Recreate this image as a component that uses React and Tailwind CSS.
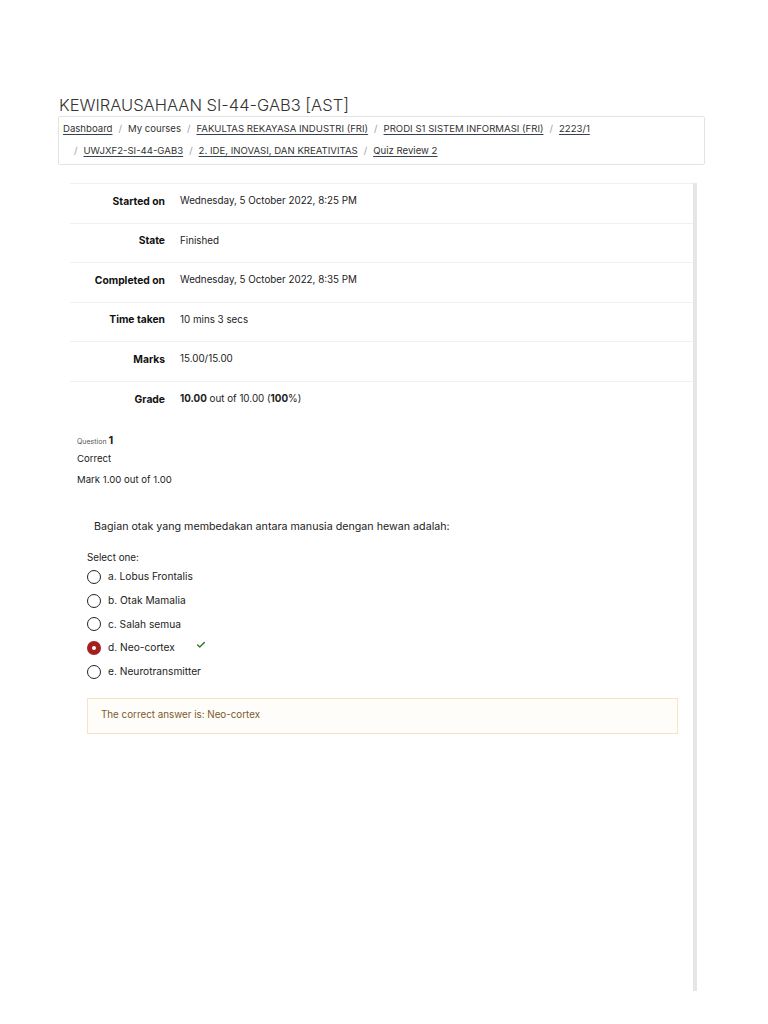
import { Check } from "lucide-react";

const crumbs1 = [
  { label: "Dashboard", link: true },
  { label: "My courses", link: false },
  { label: "FAKULTAS REKAYASA INDUSTRI (FRI)", link: true },
  { label: "PRODI S1 SISTEM INFORMASI (FRI)", link: true },
  { label: "2223/1", link: true },
];
const crumbs2 = [
  { label: "UWJXF2-SI-44-GAB3", link: true },
  { label: "2. IDE, INOVASI, DAN KREATIVITAS", link: true },
  { label: "Quiz Review 2", link: true },
];

const summary = [
  { label: "Started on", value: "Wednesday, 5 October 2022, 8:25 PM" },
  { label: "State", value: "Finished" },
  { label: "Completed on", value: "Wednesday, 5 October 2022, 8:35 PM" },
  { label: "Time taken", value: "10 mins 3 secs" },
  { label: "Marks", value: "15.00/15.00" },
  {
    label: "Grade",
    value: (
      <>
        <b className="font-bold">10.00</b> out of 10.00 (<b className="font-bold">100</b>%)
      </>
    ),
  },
];

const options = [
  "a. Lobus Frontalis",
  "b. Otak Mamalia",
  "c. Salah semua",
  "d. Neo-cortex",
  "e. Neurotransmitter",
];

function Sep() {
  return <span className="text-gray-400 mx-[6px]">/</span>;
}

function Crumb({ c }) {
  return c.link ? (
    <span className="underline underline-offset-2 decoration-gray-700">{c.label}</span>
  ) : (
    <span>{c.label}</span>
  );
}

export default function App() {
  return (
    <div
      className="w-[768px] h-[1024px] bg-white text-[#222] pt-[94px]"
      style={{ fontFamily: "Inter, 'Noto Sans', sans-serif" }}
    >
      <div className="pl-[59px] pr-[63px]">
        <h1 className="text-[16.5px] leading-[22px] font-light text-[#333]">
          KEWIRAUSAHAAN SI-44-GAB3 [AST]
        </h1>
        <div className="-ml-[1px] border border-[#e3e3e3] rounded-[2px] px-[4px] pt-[1px] pb-[2px] text-[9.6px] leading-[22px] text-[#333]">
          <div className="flex items-center">
            {crumbs1.map((c, i) => (
              <span key={c.label} className="flex items-center">
                {i > 0 && <Sep />}
                <Crumb c={c} />
              </span>
            ))}
          </div>
          <div className="flex items-center pl-[5px]">
            {crumbs2.map((c) => (
              <span key={c.label} className="flex items-center">
                <Sep />
                <Crumb c={c} />
              </span>
            ))}
          </div>
        </div>
      </div>

      <div className="flex mt-[18px] pl-[70px]">
        <div className="w-[623px]">
          <div className="border-t border-[#f0f0f0]">
            {summary.map((row) => (
              <div key={row.label} className="flex items-center h-[39.6px] pb-[4px] border-b border-[#f0f0f0] last:border-b-0 text-[9.6px]">
                <div className="w-[95px] text-right font-bold text-[10.3px] text-[#111]">{row.label}</div>
                <div className="pl-[15px] text-[9.8px] text-[#222]">{row.value}</div>
              </div>
            ))}
          </div>

          <div className="pl-[7px] mt-[10px] text-[9.6px] text-[#222]">
            <div className="flex items-baseline">
              <span className="text-[7px] text-[#555]">Question</span>
              <span className="ml-[2px] text-[11px] font-bold">1</span>
            </div>
            <div className="mt-[4px] leading-[14px]">Correct</div>
            <div className="mt-[7px] leading-[14px]">Mark 1.00 out of 1.00</div>
          </div>

          <div className="pl-[17px] pr-[15px] mt-[33px] text-[9.8px] text-[#222]">
            <div className="pl-[7px] leading-[14px] text-[10.7px]">
              Bagian otak yang membedakan antara manusia dengan hewan adalah:
            </div>
            <div className="mt-[17px] leading-[14px]">Select one:</div>
            <div className="flex flex-col">
              {options.map((o) => {
                const checked = o.startsWith("d.");
                return (
                  <div key={o} className="flex items-center h-[23.7px]">
                    {checked ? (
                      <span className="w-[14px] h-[14px] rounded-full bg-[#a3201f] flex items-center justify-center">
                        <span className="w-[4px] h-[4px] rounded-full bg-white" />
                      </span>
                    ) : (
                      <span className="w-[14px] h-[14px] rounded-full border-[1.6px] border-[#222]" />
                    )}
                    <span className="ml-[7px] text-[10.2px]">{o}</span>
                    {checked && (
                      <Check className="ml-[21px] -mt-[6px] text-[#2e7d32]" size={10} strokeWidth={3.5} />
                    )}
                  </div>
                );
              })}
            </div>
            <div className="mt-[14px] border border-[#f7e4c4] bg-[#fffdf9] h-[36px] flex items-center pl-[13px] text-[#7a5a2c]">
              The correct answer is: Neo-cortex
            </div>
          </div>
        </div>
        <div className="w-[4px] h-[808px] bg-[#e6e6e6]" />
      </div>
    </div>
  );
}
